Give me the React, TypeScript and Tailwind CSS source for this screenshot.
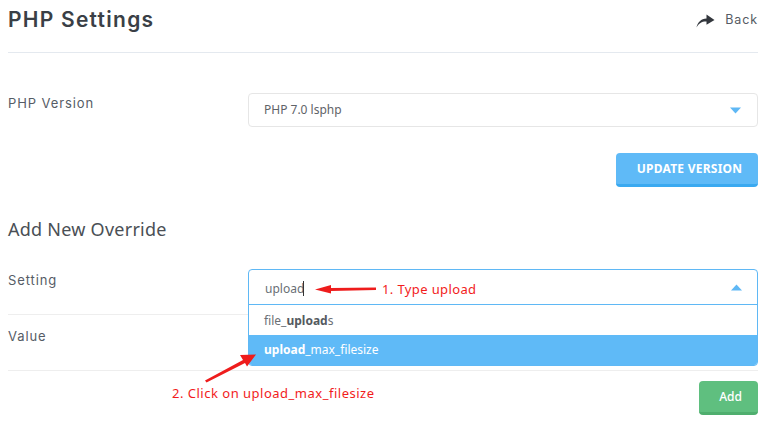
import React from "react";

const heading = { fontFamily: '"Inter", "Liberation Sans", sans-serif' };

function Caret({ up }: { up?: boolean }) {
  return (
    <svg width="11" height="7" viewBox="0 0 11 7" className="shrink-0">
      <path d={up ? "M5.5 0.5 L11 6.5 L0 6.5 Z" : "M0 0.5 L11 0.5 L5.5 6.5 Z"} fill="#5fb8f5" />
    </svg>
  );
}

function BackIcon() {
  return (
    <svg width="19" height="14" viewBox="0 0 19 14">
      <path d="M0.5 13.5 C1.5 8 5 4.8 10.5 4.4 L10.5 0.5 L18.5 6 L10.5 10.8 L10.5 7.6 C6 7.4 3 9.2 0.5 13.5 Z" fill="#33373d" />
    </svg>
  );
}

export default function App() {
  return (
    <div className="relative w-[768px] h-[430px] overflow-hidden bg-white text-[#555b63] font-['Noto_Sans','Open_Sans',sans-serif]">
      <div className="pl-2 pr-[10px]">
        <div className="flex justify-between items-center h-[53px] border-b border-[#e4e9ef] pb-[12px]">
          <h1 style={heading} className="text-[21px] font-semibold text-[#3a3f46] tracking-[1.25px]">PHP Settings</h1>
          <div className="flex items-center gap-[10px] pt-[1px]">
            <BackIcon />
            <span style={heading} className="text-[12.5px] text-[#555b63] tracking-[0.9px]">Back</span>
          </div>
        </div>

        <div className="flex mt-[40px]">
          <div style={heading} className="w-[240px] text-[13px] text-[#565c66] tracking-[0.9px] pt-[1px]">PHP Version</div>
          <div className="flex-1 h-[34px] border border-[#e6e6e6] rounded-[4px] flex items-center justify-between pl-[15px] pr-[16px] text-[12px] text-[#5f6368]">
            <span>PHP 7.0 lsphp</span>
            <Caret />
          </div>
        </div>

        <div className="flex justify-end mt-[26px]">
          <div className="w-[142px] h-[34px] rounded-[4px] bg-[#5fbaf7] border-b-[3px] border-[#3aa9f0] flex items-center justify-center pl-[5px] text-white text-[12px] font-bold tracking-[0.25px]">
            UPDATE VERSION
          </div>
        </div>

        <h2 className="text-[18px] text-[#4a4f55] mt-[30px] leading-[24px] tracking-[0.25px]">Add New Override</h2>

        <div className="flex mt-[28px] h-[46px] border-b border-[#eeeeee]">
          <div style={heading} className="w-[240px] text-[13px] text-[#565c66] tracking-[0.9px] pt-[2px]">Setting</div>
        </div>
        <div className="flex h-[56px] border-b border-[#eeeeee] pt-[12px]">
          <div style={heading} className="w-[240px] text-[13px] text-[#565c66] tracking-[0.9px]">Value</div>
        </div>

        <div className="flex justify-end mt-[10px]">
          <div className="w-[59px] h-[34px] rounded-[4px] bg-[#5fbf7f] border-b-[3px] border-[#4fae6e] flex items-center justify-center pl-[4px] text-white text-[12px] font-medium">
            Add
          </div>
        </div>
      </div>

      {/* open dropdown sits over the rows */}
      <div className="absolute left-[248px] top-[269px] w-[510px] h-[97px] bg-white border border-[#5fb8f5] rounded-[4px] overflow-hidden text-[12px]">
        <div className="h-[35px] border-b border-[#5fb8f5] flex items-center justify-between pl-[16px] pr-[15px]">
          <span className="text-[#6a6f75] flex items-center pt-[3px]">upload<span className="w-px h-[15px] bg-[#333] ml-[-1px]" /></span>
          <Caret up />
        </div>
        <div className="h-[30px] flex items-center pl-[15px] pt-[1px] text-[#6a6f75]">
          <span>file_<b className="font-bold text-[#555a60]">upload</b>s</span>
        </div>
        <div className="h-[30px] flex items-center pl-[15px] bg-[#5fbaf7] text-white">
          <span><b className="font-bold">upload</b>_max_filesize</span>
        </div>
      </div>

      {/* red annotations */}
      <span className="absolute left-[382px] top-[280px] text-[13px] leading-[18px] tracking-[0.38px] text-[#f21c1c]">1. Type upload</span>
      <span className="absolute left-[172px] top-[384px] text-[13px] leading-[18px] tracking-[0.5px] text-[#f21c1c]">2. Click on upload_max_filesize</span>
      <svg className="absolute left-0 top-0 pointer-events-none" width="768" height="430">
        <path d="M376 287.5 L331 288 L331 285 L315 289.5 L331 293.5 L331 291 L376 290 Z" fill="#ee1c1c" />
        <path d="M205 380.5 L243 360 L240 355 L256 354.5 L247 366.5 L245 363 L206.5 382.5 Z" fill="#ee1c1c" />
      </svg>
    </div>
  );
}
